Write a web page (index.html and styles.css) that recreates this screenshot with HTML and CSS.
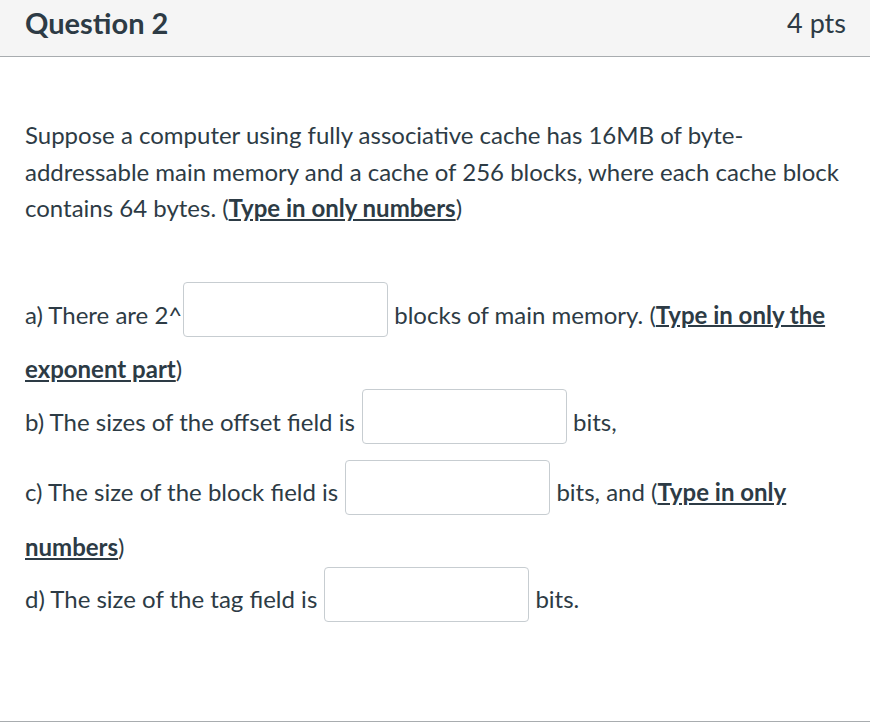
FILE: index.html
```html
<!DOCTYPE html>
<html>
<head>
<meta charset="utf-8">
<link rel="stylesheet" href="styles.css">
</head>
<body>
<div class="question">
  <div class="header">
    <span class="title">Question 2</span>
    <span class="pts">4 pts</span>
  </div>
  <div class="body">
    <p class="intro">Suppose a computer using fully associative cache has 16MB of byte-addressable main memory and a cache of 256 blocks, where each cache block contains 64 bytes. (<a class="hint">Type in only numbers</a>)</p>
    <p class="ans ans-a">a) There are 2^<input class="blank" type="text">blocks of main memory. (<a class="hint">Type in only the exponent part</a>)</p>
    <p class="ans">b) The sizes of the offset field is <input class="blank" type="text">bits,</p>
    <p class="ans">c) The size of the block field is <input class="blank" type="text">bits, and (<a class="hint">Type in only numbers</a>)</p>
    <p class="ans">d) The size of the tag field is <input class="blank" type="text">bits.</p>
  </div>
</div>
</body>
</html>
```
FILE: styles.css
```css
html, body {
  margin: 0;
  padding: 0;
  background: #ffffff;
}
.question {
  font-family: Lato, "Liberation Sans", sans-serif;
  color: #2d3b45;
  width: 870px;
  height: 722px;
  border-bottom: 1px solid #a8acaf;
  box-sizing: border-box;
}
.header {
  display: flex;
  justify-content: space-between;
  align-items: center;
  height: 57px;
  padding: 0 24px 12px 25px;
  background: #f5f5f5;
  border-bottom: 1px solid #a8acaf;
  box-sizing: border-box;
}
.title {
  font-size: 29px;
  font-weight: 700;
}
.pts {
  font-size: 27px;
  font-weight: 400;
}
.body {
  padding: 0 25px;
}
.intro {
  margin: 60px 0 0;
  font-size: 24px;
  line-height: 36.5px;
}
.ans {
  font-size: 24px;
  line-height: 36.5px;
  margin: 0;
}
.ans-a {
  margin-top: 54px;
}
.hint {
  font-weight: 700;
  text-decoration: underline;
  color: #2d3b45;
}
.blank {
  width: 205px;
  height: 55px;
  box-sizing: border-box;
  border: 1px solid #c7cdd1;
  border-radius: 4px;
  margin: 1.5px 6px 14px 1px;
  vertical-align: 4px;
  font: inherit;
  padding: 0 8px;
}
```
